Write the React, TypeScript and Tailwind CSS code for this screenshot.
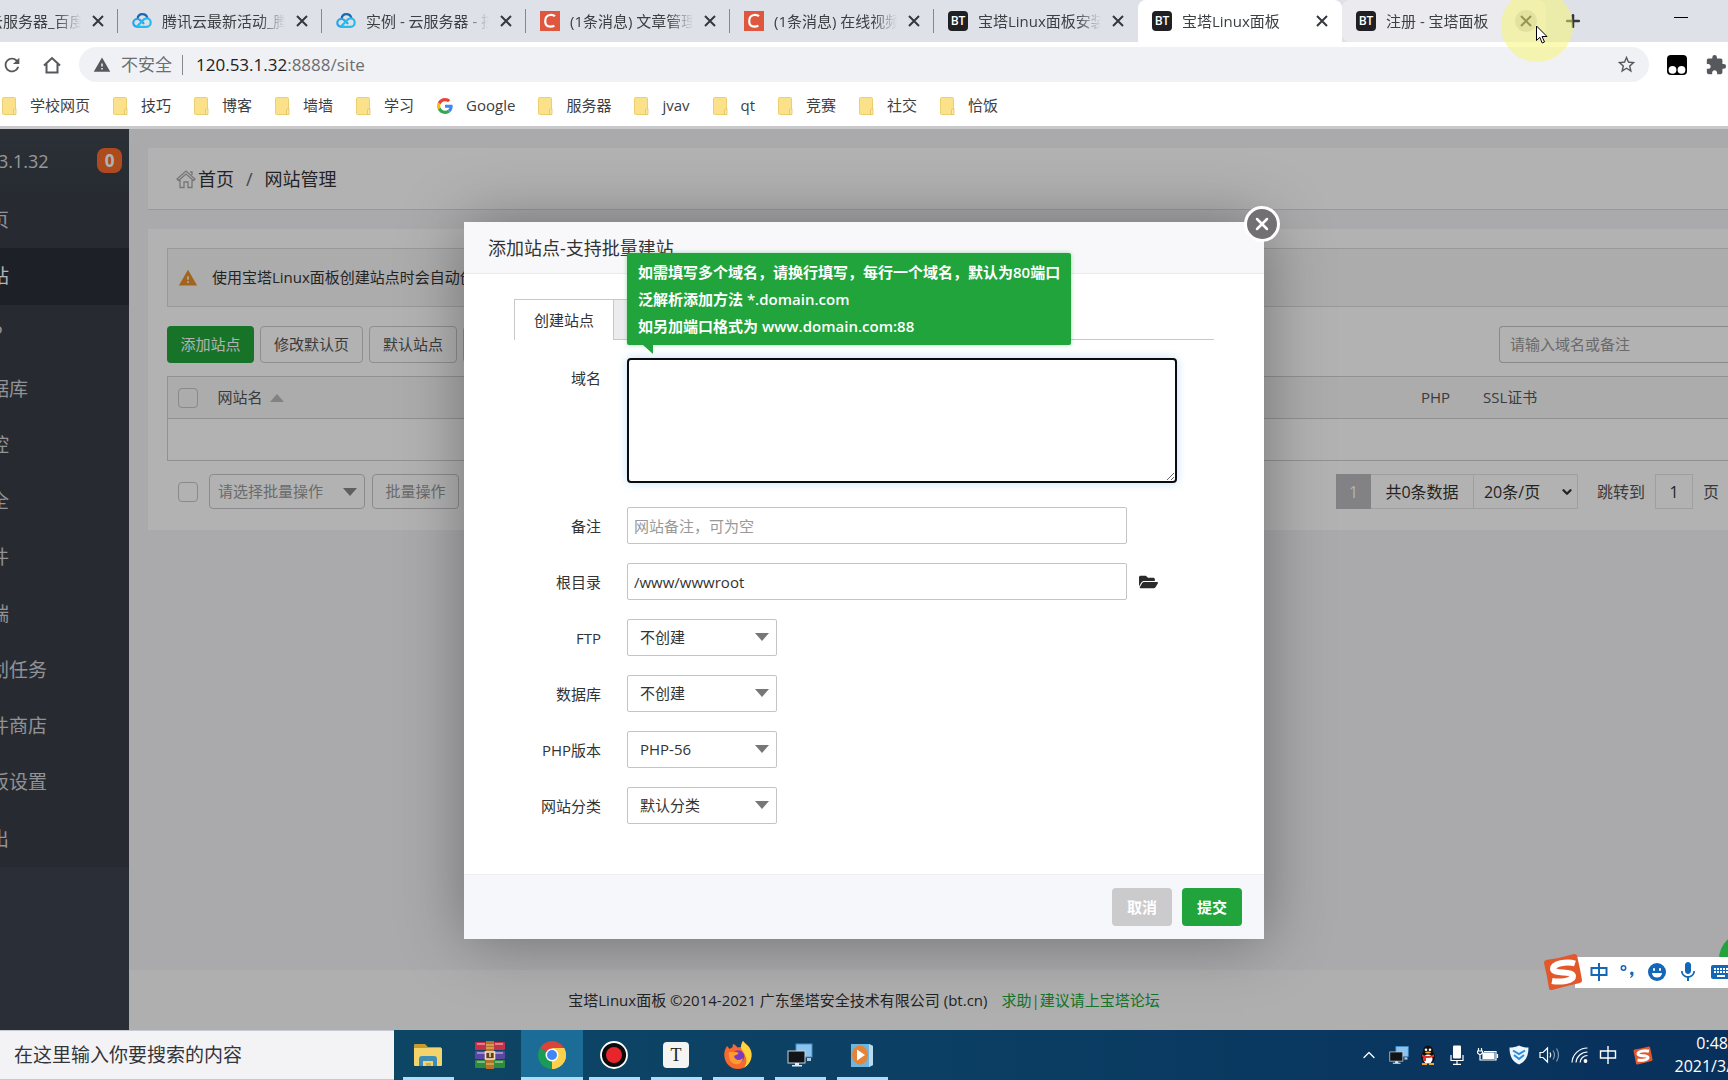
import React, { useState } from 'react';
import { MdExtension, MdRefresh, MdStarBorder, MdWarning, MdMic, MdKeyboard } from 'react-icons/md';
import { FaFolderOpen } from 'react-icons/fa';
import { ChevronDown, ChevronUp, Plus, X } from 'lucide-react';

type TabIconName = 'cloud' | 'csdn' | 'bt';

interface BrowserTab {
  title: string;
  icon: TabIconName;
  state?: 'active' | 'hover';
}

const tabs: BrowserTab[] = [
  { title: '腾讯云服务器_百度搜索', icon: 'cloud' },
  { title: '腾讯云最新活动_腾讯云', icon: 'cloud' },
  { title: '实例 - 云服务器 - 控制台', icon: 'cloud' },
  { title: '(1条消息) 文章管理-CSDN', icon: 'csdn' },
  { title: '(1条消息) 在线视频-CSDN', icon: 'csdn' },
  { title: '宝塔Linux面板安装教程', icon: 'bt' },
  { title: '宝塔Linux面板', icon: 'bt', state: 'active' },
  { title: '注册 - 宝塔面板', icon: 'bt', state: 'hover' },
];

const bookmarks = ['学校网页', '技巧', '博客', '墙墙', '学习', 'Google', '服务器', 'jvav', 'qt', '竞赛', '社交', '恰饭'];

const menu = ['首页', '网站', 'FTP', '数据库', '监控', '安全', '文件', '终端', '计划任务', '软件商店', '面板设置', '退出'];

const selects = [
  { id: 'ftp', label: 'FTP', options: ['不创建', '创建'] },
  { id: 'database', label: '数据库', options: ['不创建', 'MySQL'] },
  { id: 'php', label: 'PHP版本', options: ['PHP-56', '纯静态'] },
  { id: 'category', label: '网站分类', options: ['默认分类'] },
];

const TabIcon: React.FC<{ name: TabIconName }> = ({ name }) => {
  if (name === 'cloud') {
    return (
      <svg viewBox="0 0 20 20" className="h-5 w-5 shrink-0" fill="none" strokeWidth="2.2" strokeLinecap="round">
        <path d="M5.5 8C5.8 5 7.8 3.2 10.4 3.2c2.400 0 4.300 1.500 4.900 3.600" stroke="#1767b5" />
        <path d="M5.500 15.800C3 15.800 1.300 14 1.300 11.900S3 8 5.200 8c1.500 0 2.500.500 3.600 1.600l2.700 2.700" stroke="#2aa4e8" />
        <path d="M5.500 15.800h9c2.400 0 4.200-1.900 4.200-4.300 0-2.300-1.800-4.100-4-4.100-1.400 0-2.400.500-3.400 1.500l-6 6.400" stroke="#22bdee" />
      </svg>
    );
  }
  if (name === 'csdn') {
    return (
      <svg viewBox="0 0 20 20" className="h-5 w-5 shrink-0">
        <rect width="20" height="20" fill="#e0573f" />
        <path d="M15 5.200C13.500 4 11.800 3.800 10 4 7 4.400 5.200 7 5.200 10.200c0 3.300 2 5.400 5.200 5.400 1.500 0 2.900-.300 4-1" fill="none" stroke="#fff" strokeWidth="2.200" />
      </svg>
    );
  }
  return (
    <span className="flex h-5 w-5 shrink-0 items-center justify-center rounded-sm bg-[#1f1f24] text-[12px] font-semibold text-white">BT</span>
  );
};

const GoogleIcon = () => (
  <svg viewBox="0 0 48 48" className="h-4 w-4">
    <path fill="#EA4335" d="M24 9.500c3.540 0 6.710 1.220 9.210 3.600l6.850-6.850C35.900 2.380 30.470 0 24 0 14.620 0 6.510 5.380 2.560 13.220l7.980 6.190C12.430 13.720 17.740 9.500 24 9.500z" />
    <path fill="#4285F4" d="M46.980 24.550c0-1.570-.15-3.090-.38-4.550H24v9.020h12.940c-.58 2.960-2.260 5.480-4.780 7.180l7.730 6c4.510-4.180 7.090-10.360 7.090-17.650z" />
    <path fill="#FBBC05" d="M10.530 28.590c-.48-1.450-.76-2.990-.76-4.590s.27-3.140.76-4.590l-7.980-6.190C.92 16.460 0 20.120 0 24c0 3.880.92 7.540 2.560 10.780l7.970-6.190z" />
    <path fill="#34A853" d="M24 48c6.480 0 11.930-2.130 15.890-5.810l-7.730-6c-2.150 1.450-4.920 2.300-8.160 2.300-6.260 0-11.570-4.220-13.470-9.910l-7.980 6.190C6.510 42.620 14.620 48 24 48z" />
  </svg>
);

const BookmarkFolder = () => (
  <svg viewBox="0 0 15 18" className="h-[18px] w-[15px]">
    <rect x="0.500" y="0.500" width="13" height="17" rx="1" fill="#fbe28a" stroke="#ecd070" />
    <path d="M11.500 17.500v-5l2.500-1v6z" fill="#f8e8ac" stroke="#e3c25c" strokeWidth="0.800" />
  </svg>
);

const BrowserChrome: React.FC = () => (
  <header className="border-b-3 border-[#c9c9cb] bg-white text-[#3c4043]">
    <div className="flex h-[42px] overflow-hidden bg-[#dee1e8]">
      <div className="-ml-[86px] flex shrink-0 text-[15px]">
        {tabs.map((tab, i) => (
          <div
            key={tab.title}
            className={
              tab.state === 'active'
                ? 'flex w-[204px] shrink-0 items-center rounded-t-lg bg-white pr-[9px] pl-[14px]'
                : tab.state === 'hover'
                  ? 'flex w-[204px] shrink-0 items-center rounded-lg bg-[#ebebef] pr-[9px] pl-[14px]'
                  : 'relative flex w-[204px] shrink-0 items-center pr-[9px] pl-[14px]'
            }
          >
            <TabIcon name={tab.icon} />
            <span className="ml-2.5 flex-1 overflow-hidden whitespace-nowrap [mask-image:linear-gradient(to_right,black_80%,transparent)]">
              {tab.title}
            </span>
            <button
              aria-label="关闭标签页"
              className={
                tab.state === 'hover'
                  ? 'ml-1.5 flex h-[22px] w-[22px] items-center justify-center rounded-full bg-[#cfcfd2]'
                  : 'ml-1.5 flex h-[22px] w-[22px] items-center justify-center rounded-full'
              }
            >
              <svg viewBox="0 0 12 12" className="h-3 w-3" stroke="#35383d" strokeWidth="2">
                <path d="M1 1l10 10M11 1L1 11" />
              </svg>
            </button>
            {!tab.state && i < 5 && <span className="absolute top-[9px] right-0 h-6 w-px bg-[#85888e]" />}
          </div>
        ))}
      </div>
      <button aria-label="新标签页" className="flex w-[54px] items-center justify-center">
        <Plus className="h-5 w-5 text-[#35383d]" strokeWidth={3} />
      </button>
      <button aria-label="最小化" className="mr-10 ml-auto flex w-[14px] items-start pt-[17px]">
        <span className="h-px w-full bg-black" />
      </button>
    </div>

    <div className="flex h-[45px] items-center">
      <button aria-label="重新加载" className="flex w-6 justify-center">
        <MdRefresh className="h-[22px] w-[22px] text-[#55585c]" />
      </button>
      <button aria-label="主页" className="ml-4 flex w-6 justify-center">
        <svg viewBox="0 0 20 20" className="h-5 w-5" fill="none" stroke="#55585c" strokeWidth="2">
          <path d="M2 10.500L10 3l8 7.500M4.500 9v8.500h11V9" />
        </svg>
      </button>
      <div className="ml-[15px] flex h-[35px] flex-1 items-center rounded-full bg-[#f0f1f4] pr-3 pl-[14px] text-[17px]">
        <MdWarning className="h-[18px] w-[18px] text-[#55585c]" />
        <span className="ml-2.5 text-[#6b6e73]">不安全</span>
        <span className="ml-2.5 h-5 w-px bg-[#85888e]" />
        <p className="ml-[13px] flex-1 text-[#6b6e73]">
          <span className="text-[#202124]">120.53.1.32</span>:8888/site
        </p>
        <button aria-label="收藏">
          <MdStarBorder className="h-[21px] w-[21px] text-[#55585c]" />
        </button>
      </div>
      <button aria-label="扩展脚本" className="ml-[18px]">
        <svg viewBox="0 0 20 20" className="h-5 w-5">
          <rect width="20" height="20" rx="4" />
          <circle cx="5.500" cy="14.800" r="3.900" fill="#fff" />
          <circle cx="14.500" cy="14.800" r="3.900" fill="#fff" />
        </svg>
      </button>
      <button aria-label="扩展程序" className="mr-px ml-[18px]">
        <MdExtension className="h-[22px] w-[22px] text-[#55585c]" />
      </button>
    </div>

    <nav className="flex h-[39px] items-center gap-[23px] pb-0.5 pl-[2px] text-[15px]">
      {bookmarks.map((name) => (
        <a key={name} href="#" className="flex items-center gap-[13px] whitespace-nowrap">
          {name === 'Google' ? <GoogleIcon /> : <BookmarkFolder />}
          {name}
        </a>
      ))}
    </nav>
  </header>
);

const Sidebar: React.FC = () => (
  <aside className="flex w-[129px] shrink-0 flex-col overflow-hidden bg-[#3d444f]">
    <div className="flex h-[63px] items-center justify-between bg-linear-to-b from-[#3f464f] to-[#383f48] pr-[7px]">
      <span className="-ml-[48px] text-lg text-[#d8dadc]">120.53.1.32</span>
      <span className="flex h-[25px] w-[25px] items-center justify-center rounded-lg bg-[#f96c2b] text-[17px] font-bold text-white">0</span>
    </div>
    <nav className="flex h-[675px] flex-col bg-[#383e47]">
      {menu.map((item) => (
        <a
          key={item}
          href="#"
          className={
            item === '网站'
              ? 'flex flex-1 items-center bg-[#2a2e38] text-white'
              : 'flex flex-1 items-center text-[#d0d2d6]'
          }
        >
          <span className="-ml-[29px] text-[19px] whitespace-nowrap">{item}</span>
        </a>
      ))}
    </nav>
  </aside>
);

const SitePanel: React.FC = () => (
  <section className="mt-[19px] ml-[19px] bg-white pt-[19px] pb-[21px] pl-[19px] text-[15px] text-[#555]">
    <div className="flex h-[59px] items-center border border-r-0 border-[#dcdcde] bg-[#f7f6f8] pl-2.5 text-[#333]">
      <MdWarning className="h-5 w-5 text-[#e8912a]" />
      <p className="ml-3.5 whitespace-nowrap">使用宝塔Linux面板创建站点时会自动创建权限配置，建议统一使用www用户。</p>
    </div>

    <div className="mt-[19px] flex h-[37px] items-stretch">
      <button className="w-[87px] rounded bg-[#20a53a] text-white">添加站点</button>
      <button className="ml-1.5 w-[103px] rounded border border-[#ccc]">修改默认页</button>
      <button className="ml-1.5 w-[88px] rounded border border-[#ccc]">默认站点</button>
      <button className="ml-1.5 w-[88px] rounded border border-[#ccc]">分类管理</button>
      <input
        aria-label="搜索网站"
        placeholder="请输入域名或备注"
        className="ml-auto w-[229px] rounded-l-sm border border-r-0 border-[#c4c4c4] pl-2.5 placeholder:text-[#999]"
      />
    </div>

    <table className="mt-[13px] w-full table-fixed border-y border-l border-[#d0d0d2] text-left">
      <thead>
        <tr className="h-[42px] border-b border-[#d0d0d2] bg-[#f6f6f8]">
          <th className="w-[50px] pl-[10px]">
            <input type="checkbox" aria-label="全选" className="block h-5 w-5 appearance-none rounded-sm border border-[#c4c4c6]" />
          </th>
          <th className="font-normal">
            <button className="flex items-center gap-[7px]">
              网站名
              <svg viewBox="0 0 14 8" className="h-2 w-[14px]"><path d="M0 8L7 0l7 8z" fill="#bbb" /></svg>
            </button>
          </th>
          <th className="w-[62px] font-normal">PHP</th>
          <th className="w-[245px] font-normal">SSL证书</th>
        </tr>
      </thead>
      <tbody>
        <tr className="h-[42px]">
          <td colSpan={4} />
        </tr>
      </tbody>
    </table>

    <div className="mt-[13px] flex h-[35px] items-center">
      <input type="checkbox" aria-label="选择全部网站" className="ml-[11px] block h-5 w-5 appearance-none rounded-sm border border-[#c4c4c6]" />
      <div className="relative ml-[11px] h-full w-[156px]">
        <select aria-label="批量操作类型" className="h-full w-full appearance-none rounded-sm border border-[#c8c8ca] pl-2 text-[#999]">
          <option>请选择批量操作</option>
        </select>
        <svg viewBox="0 0 14 8" className="pointer-events-none absolute top-3.5 right-2 h-2 w-[14px]"><path d="M0 0h14L7 8z" fill="#888" /></svg>
      </div>
      <button className="ml-[7px] h-full w-[87px] rounded border border-[#c8c8ca] text-[#999]">批量操作</button>

      <div className="ml-auto flex h-full items-center pr-[9px] text-base text-[#333]">
        <span className="flex h-full w-[35px] items-center justify-center bg-[#bbb9bc] text-white">1</span>
        <span className="flex h-full w-[102px] items-center justify-center border-y border-[#e4e4e4] whitespace-nowrap">共0条数据</span>
        <div className="relative h-full w-[105px]">
          <select aria-label="每页条数" className="h-full w-full appearance-none border border-[#e4e4e4] pl-2.5">
            <option>20条/页</option>
          </select>
          <ChevronDown className="pointer-events-none absolute top-[11px] right-1 h-3.5 w-3.5" strokeWidth={4} />
        </div>
        <label htmlFor="page" className="ml-[19px] text-[#555]">跳转到</label>
        <input id="page" defaultValue="1" className="ml-2.5 h-full w-[38px] border border-[#e4e4e4] text-center" />
        <span className="ml-2.5 text-[#555]">页</span>
      </div>
    </div>
  </section>
);

const AddSiteModal: React.FC<{ onClose: () => void }> = ({ onClose }) => {
  const [path, setPath] = useState('/www/wwwroot');

  return (
    <div className="absolute inset-0 flex items-start justify-center bg-black/30 pt-[93px]">
      <div role="dialog" className="relative w-[800px] bg-white text-[15px] text-[#333] shadow-[1px_1px_60px_rgba(0,0,0,0.35)]">
        <h2 className="flex h-[52px] items-center border-b border-[#eaeaec] bg-[#f8f8fa] pl-6 text-lg">添加站点-支持批量建站</h2>
        <button
          aria-label="关闭"
          onClick={onClose}
          className="absolute -top-4 -right-4 flex h-9 w-9 items-center justify-center rounded-full border-3 border-white bg-[#727072]"
        >
          <X className="h-5 w-5 text-white" strokeWidth={3} />
        </button>

        <div className="px-[50px] pt-[25px]">
          <div className="flex h-[41px] border-b border-[#c8c8c8]">
            <button className="-mb-px w-[100px] border border-b-0 border-[#c8c8c8] bg-white">创建站点</button>
            <button className="w-[100px] border-t border-r border-[#c8c8c8] bg-[#ececee]">批量创建</button>
          </div>
        </div>

        <form className="mt-[18px] flex flex-col gap-[19px] pb-[50px]" onSubmit={(e) => e.preventDefault()}>
          <div className="mb-[5px] flex">
            <label htmlFor="domain" className="w-[137px] pt-[9px] text-right">域名</label>
            <div className="relative ml-[26px]">
              <textarea
                id="domain"
                className="block h-[125px] w-[550px] resize rounded border-2 border-[#0c0c10] bg-white shadow-[0_0_10px_rgba(102,175,233,0.4)] outline-none"
              />
              {/* domain format hint */}
              <div className="absolute bottom-full left-0 mb-[13px] rounded-xs bg-[#22a43c] px-[11px] pt-1.5 pb-[5px] leading-[27px] font-semibold whitespace-nowrap text-white shadow-[0_0_4px_rgba(32,165,58,0.4)]">
                <p>如需填写多个域名，请换行填写，每行一个域名，默认为80端口</p>
                <p>泛解析添加方法 *.domain.com</p>
                <p>如另加端口格式为 www.domain.com:88</p>
                <svg viewBox="0 0 10 9" className="absolute top-full left-4 h-[9px] w-2.5"><path d="M0 0h10v9z" fill="#22a43c" /></svg>
              </div>
            </div>
          </div>

          <div className="flex h-[37px] items-center">
            <label htmlFor="remark" className="w-[137px] pt-0.5 text-right">备注</label>
            <input id="remark" placeholder="网站备注，可为空" className="ml-[26px] h-full w-[500px] rounded-xs border border-[#c4c4c4] px-1.5 placeholder:text-[#999]" />
          </div>

          <div className="flex h-[37px] items-center">
            <label htmlFor="path" className="w-[137px] pt-0.5 text-right">根目录</label>
            <input
              id="path"
              value={path}
              onChange={(e) => setPath(e.target.value)}
              className="ml-[26px] h-full w-[500px] rounded-xs border border-[#c4c4c4] px-1.5"
            />
            <button type="button" aria-label="选择目录" className="ml-3">
              <FaFolderOpen className="h-[18px] w-[19px] text-[#2b2b2b]" />
            </button>
          </div>

          {selects.map((field) => (
            <div key={field.id} className="flex h-[37px] items-center">
              <label htmlFor={field.id} className="w-[137px] pt-0.5 text-right">{field.label}</label>
              <div className="relative ml-[26px] h-full w-[150px]">
                <select id={field.id} className="h-full w-full appearance-none rounded-xs border border-[#c4c4c4] bg-white pl-3">
                  {field.options.map((option) => (
                    <option key={option}>{option}</option>
                  ))}
                </select>
                <svg viewBox="0 0 14 8" className="pointer-events-none absolute top-3.5 right-2 h-2 w-[14px]"><path d="M0 0h14L7 8z" fill="#777" /></svg>
              </div>
            </div>
          ))}
        </form>

        <div className="flex h-[65px] items-center justify-end gap-2.5 border-t border-[#eeeef0] bg-[#f5f7fa] pr-[22px] font-bold text-white">
          <button onClick={onClose} className="h-[38px] w-[60px] rounded bg-[#cbcbcd]">取消</button>
          <button className="h-[38px] w-[60px] rounded bg-[#22a43c]">提交</button>
        </div>
      </div>
    </div>
  );
};

const SogouLogo: React.FC<{ className: string }> = ({ className }) => (
  <svg viewBox="0 0 40 38" className={className}>
    <path d="M3 7Q18 5 31 1q2-.500 3 1.500Q37 15 39 27q.500 2-2 3-14 3-28 7-2.500.500-3-1.500Q4 22 1 10q-.300-2 2-3z" fill="#e2582b" />
    <path d="M32 10.500C24 8 9.500 10.500 10 16c.500 5.500 19.500 1.500 20 7 .400 5-13 6.500-21 5" fill="none" stroke="#fff" strokeWidth="6" />
  </svg>
);

const InputMethodBar: React.FC = () => (
  <div className="absolute -right-1 bottom-[39px] flex items-center">
    <SogouLogo className="relative z-10 -mr-2 h-[38px] w-[40px]" />
    <div className="flex h-[31px] items-center gap-3 bg-white pl-[15px] text-[#1467b8]">
      <svg viewBox="0 0 18 18" className="h-[18px] w-[18px]" fill="none" stroke="currentColor" strokeWidth="2">
        <path d="M1.500 5h15v7h-15zM9 0v18" />
      </svg>
      <svg viewBox="0 0 16 16" className="h-4 w-4">
        <circle cx="3.500" cy="4" r="2.200" fill="none" stroke="currentColor" strokeWidth="1.500" />
        <path d="M11.500 7.500a2 2 0 012 2.300c0 2-1 3.500-3 4.200l-.500-1c1-.500 1.500-1 1.500-1.800a1.900 1.900 0 010-3.700z" fill="currentColor" />
      </svg>
      <svg viewBox="0 0 18 18" className="h-[18px] w-[18px]">
        <circle cx="9" cy="9" r="9" fill="currentColor" />
        <rect x="5" y="5" width="2" height="3" rx="1" fill="#fff" />
        <rect x="11" y="5" width="2" height="3" rx="1" fill="#fff" />
        <path d="M4 10h10a5 4.500 0 01-10 0z" fill="#fff" />
      </svg>
      <MdMic className="-mx-0.5 h-6 w-6" />
      <MdKeyboard className="-mx-px h-6 w-6" />
    </div>
  </div>
);

const Monitors: React.FC<{ className: string }> = ({ className }) => (
  <svg viewBox="0 0 26 26" className={className}>
    <rect x="9" y="2" width="16" height="13" fill="#8cc4f0" stroke="#4d8fc6" />
    <path d="M20 16h4v3h-4z" fill="#b8c8d4" />
    <rect x="1" y="9" width="17" height="12" fill="#111518" stroke="#c6d3dc" />
    <path d="M8 21h4v2h3v1.500H5V23h3z" fill="#e4eaee" />
  </svg>
);

const apps = [
  {
    name: '文件资源管理器',
    open: true,
    icon: (
      <svg viewBox="0 0 28 24" className="h-6 w-7">
        <path d="M0 2q0-1 1-1h10l3 3h13v5H0z" fill="#c89b2c" />
        <path d="M0 5h27q1 0 1 1v16q0 1-1 1H1q-1 0-1-1z" fill="#f3d36b" />
        <path d="M5 23v-7q0-3 3-3h12q3 0 3 3v7h-4v-5H9v5z" fill="#3e8db4" />
        <path d="M12 20h5v3h-5z" fill="#cbb257" />
      </svg>
    ),
  },
  {
    name: 'WinRAR',
    open: false,
    icon: (
      <svg viewBox="0 0 30 28" className="h-7 w-[30px]">
        <rect x="0" y="1" width="30" height="8" rx="1" fill="#c5304a" />
        <rect x="0" y="10" width="30" height="8" rx="1" fill="#5b45a5" />
        <rect x="0" y="19" width="30" height="8" rx="1" fill="#2f8a3a" />
        <path d="M2 3h8M20 3h8M2 12h8M20 12h8M2 21h8M20 21h8" stroke="#fff" strokeOpacity=".5" strokeWidth="1.500" />
        <rect x="11" y="0" width="8" height="28" fill="#b5702b" />
        <path d="M11 4h8M11 7h8M11 23h8" stroke="#ecc87a" />
        <rect x="10.500" y="11" width="9" height="7" fill="#6a3c18" stroke="#f1e3c0" strokeWidth="1.600" />
        <path d="M15 12v4" stroke="#f1e3c0" strokeWidth="1.500" />
      </svg>
    ),
  },
  {
    name: 'Chrome',
    open: true,
    icon: (
      <svg viewBox="0 0 28 28" className="h-7 w-7">
        <path d="M14 14L1.880 7A14 14 0 0126.120 7z" fill="#db4437" />
        <path d="M14 14L26.120 7A14 14 0 0114 28z" fill="#fdd04b" />
        <path d="M14 14v14A14 14 0 011.880 7z" fill="#1c9b58" />
        <path d="M14 7h12.120A14 14 0 0114 28l6-10.500z" fill="#fdd04b" />
        <circle cx="14" cy="14" r="6.500" fill="#fff" />
        <circle cx="14" cy="14" r="5" fill="#4285f4" />
      </svg>
    ),
  },
  {
    name: '录屏',
    open: true,
    icon: (
      <svg viewBox="0 0 28 28" className="h-7 w-7">
        <circle cx="14" cy="14" r="13" fill="#0b0b0b" stroke="#fff" strokeWidth="1.800" />
        <circle cx="14" cy="14" r="8" fill="#e8252b" />
      </svg>
    ),
  },
  {
    name: 'Typora',
    open: true,
    icon: (
      <span className="flex h-[26px] w-[26px] items-center justify-center rounded-sm bg-[#f4f4f2] font-['Liberation_Serif',serif] text-lg text-[#222]">T</span>
    ),
  },
  {
    name: 'Firefox',
    open: true,
    icon: (
      <svg viewBox="0 0 28 28" className="h-7 w-7">
        <path d="M3 5c1 1 2 2 2.500 3 1-1 2-1.500 3-1.800L9 3c2 .500 3.500 2 4.500 3.500L17 6c.300-2.500 1-4.500 2-6 2 3 6 4 8 10 2.500 9-4 18-13 18S-1 20 .500 11C1 8.500 2 6.500 3 5z" fill="#f8692f" />
        <path d="M19 0c2 3 6 4 8 10 2 8-2 14-7 17 3-5 3-9 1-13-1-3-4-5-4-8 0-2 1-5 2-6z" fill="#ffd43a" />
        <circle cx="14" cy="15.500" r="6.300" fill="#7a3bc4" />
        <path d="M5 11c4 0 6-1 9 .500 2 1-2 2.500-4 3.500 1 5 6 5 9 2-1 6-6 7.500-9.500 5.500C6 21 4 16 5 11z" fill="#fd9b31" />
      </svg>
    ),
  },
  { name: '远程桌面', open: true, icon: <Monitors className="h-[26px] w-[26px]" /> },
  {
    name: '视频播放器',
    open: true,
    icon: (
      <svg viewBox="0 0 26 26" className="h-[26px] w-[26px]">
        <path d="M2 2h18l4 2v19l-4 2H2z" fill="#6fb5dd" />
        <path d="M20 2l4 2v19l-4 2z" fill="#b7dcf0" />
        <ellipse cx="11" cy="13" rx="8" ry="9.500" fill="#e58436" />
        <path d="M8 7.500l8 5.500-8 5.500z" fill="#fff" />
      </svg>
    ),
  },
];

const Taskbar: React.FC = () => (
  <footer className="flex h-[50px] overflow-hidden bg-linear-to-r from-[#0f4a64] via-[#0c4064] to-[#08305c] text-white">
    <input
      aria-label="搜索"
      placeholder="在这里输入你要搜索的内容"
      className="w-[394px] border-y border-[#c5cad2] bg-[#f3f3f5] pl-3.5 text-[19px] placeholder:text-[#33353a]"
    />
    <div className="flex pl-[3px]">
      {apps.map((app) => (
        <button
          key={app.name}
          aria-label={app.name}
          className={app.name === 'Chrome' ? 'flex w-[62px] flex-col items-center bg-[#1c6c98]' : 'flex w-[62px] flex-col items-center'}
        >
          <span className="flex flex-1 items-center pt-0.5">{app.icon}</span>
          <span className={app.name === 'Chrome' ? 'h-[3px] w-full bg-[#a9dffa]' : app.open ? 'h-[3px] w-[51px] bg-[#a9dffa]' : 'h-[3px]'} />
        </button>
      ))}
    </div>

    <div className="-mr-1 ml-auto flex items-center gap-[10px]">
      <ChevronUp className="h-5 w-5" strokeWidth={1.5} />
      <Monitors className="h-5 w-5" />
      {/* QQ */}
      <svg viewBox="0 0 18 20" className="h-5 w-[18px]">
        <ellipse cx="9" cy="12" rx="7" ry="7" fill="#111" />
        <ellipse cx="9" cy="6" rx="5" ry="5.500" fill="#111" />
        <ellipse cx="9" cy="14" rx="4.500" ry="4.500" fill="#fff" />
        <circle cx="7" cy="4.800" r="1.300" fill="#fff" />
        <circle cx="11" cy="4.800" r="1.300" fill="#fff" />
        <ellipse cx="9" cy="7.500" rx="3" ry="1" fill="#f5a623" />
        <path d="M3 9.500q6 3 12 0v2.200q-4 1.600-8 1.200V16H4.500v-3.800L3 11.500z" fill="#e0322f" />
        <path d="M3 19h5M10 19h5" stroke="#f5a623" strokeWidth="2" />
      </svg>
      <svg viewBox="0 0 20 20" className="h-5 w-5">
        <rect x="6" y="0.500" width="8" height="13" rx="1" fill="#fff" />
        <path d="M4 10v5.500h12V10M10 15.500V19M6 19.300h8" fill="none" stroke="#fff" strokeWidth="1.200" />
      </svg>
      <svg viewBox="0 0 22 16" className="h-4 w-[22px]" fill="none" stroke="#fff" strokeWidth="1.200">
        <path d="M1.500 1v3M4.500 1v3M.500 4h5v2L3 8 .500 6zM3 8v5h16V4.500H7M20.500 7v4" />
        <rect x="6" y="6" width="11" height="5.500" fill="#fff" />
      </svg>
      <svg viewBox="0 0 20 20" className="h-5 w-5">
        <path d="M10 .500C13 2 16 2.500 19.500 2.500c0 8-2.500 14-9.500 17C3 16.500.500 10.500.500 2.500 4 2.500 7 2 10 .500z" fill="#eaf5ff" />
        <path d="M4 5.500l6 3.500 6-3.500M5 10l5 4 5-4" fill="none" stroke="#2b8be0" strokeWidth="2" />
      </svg>
      <svg viewBox="0 0 22 18" className="h-[18px] w-[22px]" fill="none" stroke="#fff" strokeWidth="1.200">
        <path d="M1 6.500h3L8.500 2v14L4 11.500H1zM11 6.500q1.500 2.500 0 5" />
        <path d="M14 4.500q3 4.500 0 9M17.500 2.500q4 6.500 0 13" strokeOpacity=".5" />
      </svg>
      <svg viewBox="0 0 18 18" className="h-[18px] w-[18px]" fill="none" stroke="#fff" strokeWidth="1.200">
        <path d="M1 16.500A15.500 15.500 0 0116.500 2M5 16.500A11.500 11.500 0 0116.500 6M9 16.500a7.500 7.500 0 017.500-7" />
        <circle cx="14.500" cy="15" r="1.300" fill="#fff" />
      </svg>
      <svg viewBox="0 0 18 20" className="h-5 w-[18px]" fill="none" stroke="#fff" strokeWidth="1.400">
        <path d="M1.500 6h15v7h-15zM9 1v18" />
      </svg>
      <SogouLogo className="ml-1.5 h-[19px] w-5" />
      <div className="ml-3 text-right text-base leading-[23px]">
        <p className="pr-1">0:48</p>
        <p>2021/3/</p>
      </div>
    </div>
  </footer>
);

const App: React.FC = () => {
  const [open, setOpen] = useState(true);

  return (
    <div className="relative flex h-screen flex-col overflow-hidden font-['Open_Sans','Noto_Sans_CJK_SC',sans-serif]">
      <BrowserChrome />

      <div className="relative flex min-h-0 flex-1 overflow-hidden">
        <Sidebar />
        <main className="flex min-w-0 flex-1 flex-col bg-[#f4f3f5]">
          <div className="mt-[19px] ml-[19px] flex h-[62px] items-center border-b border-[#dcdcde] bg-white pl-7 text-lg text-[#333]">
            <svg viewBox="0 0 20 20" className="h-5 w-5" fill="none" stroke="#aaa" strokeWidth="1.300">
              <path d="M1 10L10 2l9 8-1.500 1.500L10 5l-7.500 6.500zM4 11v7.500h4V13h4v5.500h4V11M14 3h2v3" />
            </svg>
            <a href="#" className="ml-0.5">首页</a>
            <span className="mx-3 text-[#666]">/</span>
            <span>网站管理</span>
          </div>
          <SitePanel />
          <footer className="mt-auto flex h-[60px] items-center justify-center gap-3.5 bg-[#fbfbfb] pr-[129px] text-[15px] text-[#333]">
            <span>宝塔Linux面板 ©2014-2021 广东堡塔安全技术有限公司 (bt.cn)</span>
            <a href="#" className="text-[#20a53a]">求助|建议请上宝塔论坛</a>
          </footer>
        </main>

        {open && <AddSiteModal onClose={() => setOpen(false)} />}

        <span className="absolute -right-[43px] bottom-[45px] h-[52px] w-[52px] rounded-full bg-[#22a43c]" />
        <InputMethodBar />
      </div>

      <Taskbar />

      {/* mouse pointer with its highlight */}
      <div className="pointer-events-none absolute -top-[10px] left-[1501px] h-[72px] w-[72px] rounded-full bg-[#f8f56c] opacity-50" />
      <svg viewBox="0 0 12 19" className="pointer-events-none absolute top-[25px] left-[1536px] h-[19px] w-3">
        <path d="M.500 1v14.500l3.300-3.200 2.400 5.700 2.300-1-2.400-5.500h4.900z" fill="#fff" stroke="#000" />
      </svg>
    </div>
  );
};

export default App;
